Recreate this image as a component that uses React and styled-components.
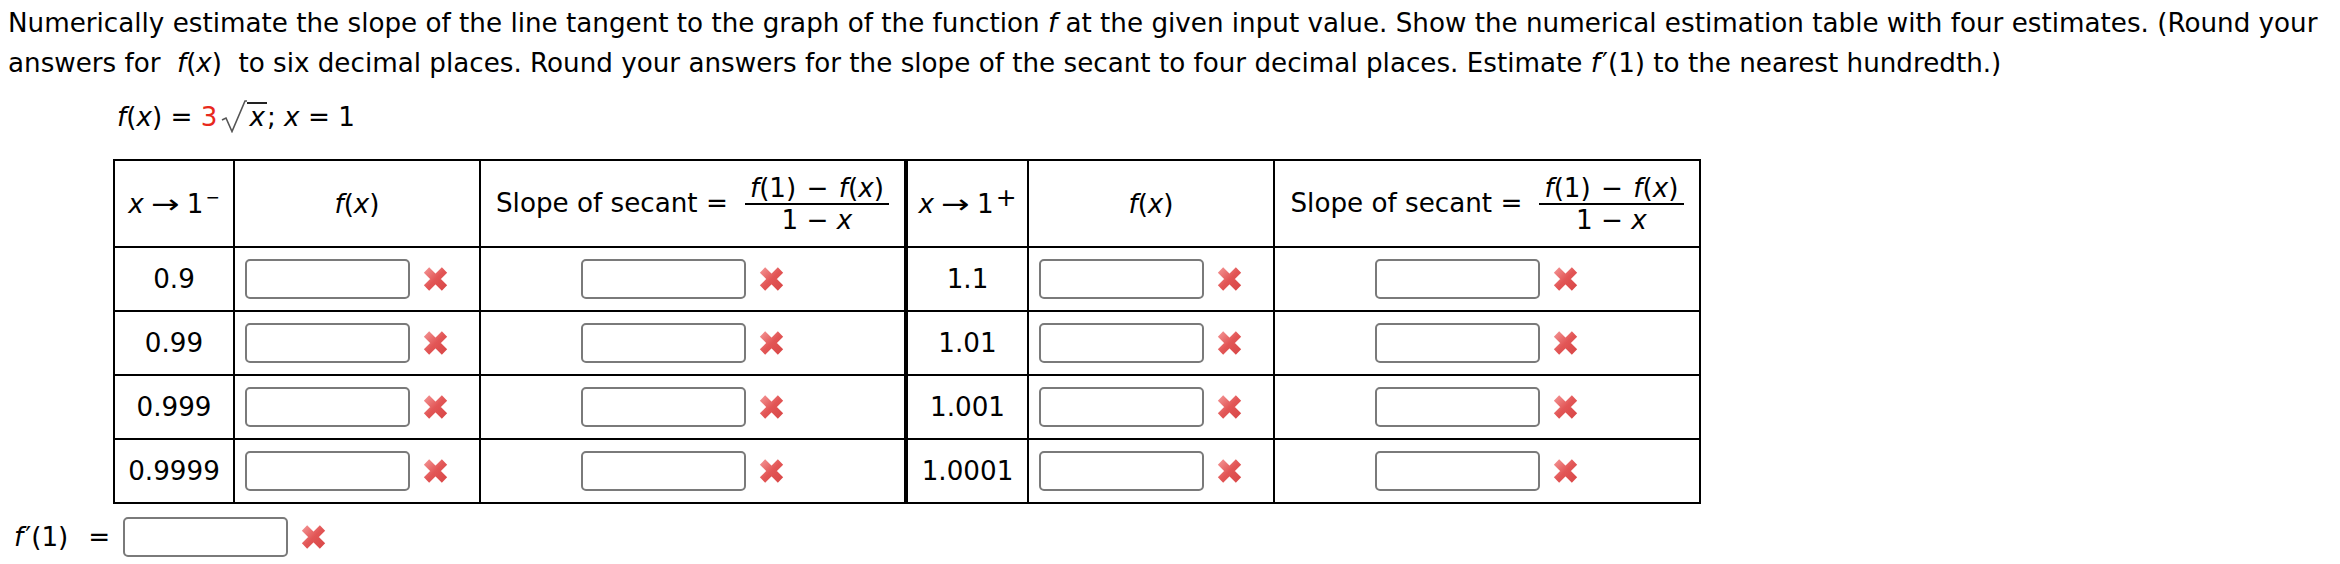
import styled, { createGlobalStyle } from "styled-components";

const GlobalStyle = createGlobalStyle`
  body {
    margin: 0;
    background: #ffffff;
    color: #000000;
    font-family: "DejaVu Sans", Verdana, sans-serif;
    font-size: 26.2px;
  }
`;

const Page = styled.div`
  padding: 3px 8px 0 8px;
`;

const Question = styled.div`
  line-height: 40px;

  > span {
    display: block;
    white-space: nowrap;
  }
`;

const Math = styled.span`
  padding: 0 ${(p) => (p.$pad ? "8px" : "0")};
  white-space: nowrap;
`;

const Var = styled.i`
  font-style: italic;
`;

const Prime = styled.span`
  margin-left: 2px;
`;

const Arrow = styled.span`
  display: inline-block;
  margin: 0 11px 0 10px;
  transform: scaleX(1.3);
`;

const Op = styled.span`
  white-space: pre;
  margin: 0 ${(p) => (p.$wide ? "2px" : "0")};
`;

const Indented = styled.div`
  margin-left: 105px;
`;

const Equation = styled.div`
  margin-top: 14px;
  height: 40px;
  line-height: 40px;
  padding-left: 4px;
  white-space: pre;
`;

const Red = styled.span`
  color: #e8291c;
`;

const Radical = styled.span`
  display: inline-block;
  margin-left: 4px;
  line-height: 40px;

  svg {
    vertical-align: -7px;
  }
`;

const Radicand = styled.span`
  display: inline-block;
  border-top: 2px solid #222;
  line-height: 26px;
  padding: 0 2px;
`;

const Grid = styled.table`
  margin-top: 22px;
  border-collapse: collapse;
  table-layout: fixed;
`;

const Th = styled.th`
  border: 2px solid #000;
  border-right-width: ${(p) => (p.$thick ? "4px" : "2px")};
  height: 85px;
  padding: 0;
  font-weight: normal;
  text-align: center;
  vertical-align: middle;
  white-space: nowrap;
`;

const Td = styled.td`
  border: 2px solid #000;
  border-right-width: ${(p) => (p.$thick ? "4px" : "2px")};
  height: 62px;
  padding: 0;
  text-align: center;
  vertical-align: middle;
  white-space: nowrap;
`;

const Sup = styled.sup`
  font-size: ${(p) => p.$size};
  line-height: 0;
  vertical-align: ${(p) => p.$raise};
  margin-left: 2px;
`;

const Fraction = styled.span`
  display: inline-flex;
  flex-direction: column;
  align-items: center;
  vertical-align: middle;
  margin-left: 17px;
  line-height: 30px;
`;

const Numer = styled.span`
  border-bottom: 2px solid #000;
  padding: 0 5px;
`;

const Denom = styled.span`
  padding: 0 3px;
`;

const Answer = styled.span`
  display: inline-flex;
  align-items: center;
  padding-right: ${(p) => (p.$trail ? "20px" : "0")};
`;

const Field = styled.input`
  box-sizing: border-box;
  width: 165px;
  height: 40px;
  border: 2px solid #7a7a7a;
  border-radius: 5px;
  background: #ffffff;
  margin: 0;
  padding: 0 6px;
  font: inherit;
`;

const Mark = styled.span`
  display: inline-flex;
  margin-left: 12px;
  width: 27px;
  height: 26px;
`;

const Final = styled.div`
  margin-top: 13px;
  display: flex;
  align-items: center;
  padding-left: 6px;
  line-height: 40px;
`;

const FinalLabel = styled.span`
  margin-right: 20px;
  white-space: nowrap;
`;

const Equals = styled.span`
  margin-right: 13px;
`;

const WrongIcon = () => (
  <svg width="27" height="26" viewBox="0 0 27 26">
    <defs>
      <linearGradient id="xg" x1="0" y1="0" x2="1" y2="1">
        <stop offset="0" stopColor="#f08080" />
        <stop offset="0.5" stopColor="#e04848" />
        <stop offset="1" stopColor="#d83a3a" />
      </linearGradient>
    </defs>
    <path
      d="M4.5 4 L22.5 22 M22.5 4 L4.5 22"
      stroke="url(#xg)"
      strokeWidth="7.5"
      strokeLinecap="butt"
      opacity="0.92"
    />
  </svg>
);

const AnswerBox = ({ trail = true }) => (
  <Answer $trail={trail}>
    <Field type="text" />
    <Mark>
      <WrongIcon />
    </Mark>
  </Answer>
);

const FX = () => (
  <>
    <Var>f</Var>(<Var>x</Var>)
  </>
);

const Approach = ({ side }) => (
  <>
    <Var>x</Var>
    <Arrow>→</Arrow>1
    {side === "-" ? (
      <Sup $size="0.65em" $raise="0.55em">−</Sup>
    ) : (
      <Sup $size="0.95em" $raise="0.25em">+</Sup>
    )}
  </>
);

const SecantHeader = () => (
  <>
    Slope of secant =
    <Fraction>
      <Numer>
        <Var>f</Var>(1)
        <Op $wide>{" − "}</Op>
        <Var>f</Var>(<Var>x</Var>)
      </Numer>
      <Denom>
        1<Op>{" − "}</Op>
        <Var>x</Var>
      </Denom>
    </Fraction>
  </>
);

const left = ["0.9", "0.99", "0.999", "0.9999"];
const right = ["1.1", "1.01", "1.001", "1.0001"];

const App = () => (
  <Page>
    <GlobalStyle />
    <Question>
      <span>
        Numerically estimate the slope of the line tangent to the graph of the
        function <Var>f</Var> at the given input value. Show the numerical
        estimation table with four estimates. (Round your
      </span>
      <span>
        answers for{" "}
        <Math $pad>
          <FX />
        </Math>{" "}
        to six decimal places. Round your answers for the slope of the secant
        to four decimal places. Estimate <Var>f</Var>
        <Prime>′</Prime>(1) to the nearest hundredth.)
      </span>
    </Question>
    <Indented>
      <Equation>
        <FX />
        {" = "}
        <Red>3</Red>
        <Radical>
          <svg width="26" height="33" viewBox="0 0 26 33">
            <path
              d="M1 20 L5 18 L11 31.5 L24 1 L26 1"
              fill="none"
              stroke="#555"
              strokeWidth="1.6"
            />
          </svg>
          <Radicand>
            <Var>x</Var>
          </Radicand>
        </Radical>
        {"; "}
        <Var>x</Var>
        {" = 1"}
      </Equation>
      <Grid>
        <colgroup>
          <col style={{ width: 120 }} />
          <col style={{ width: 246 }} />
          <col style={{ width: 426 }} />
          <col style={{ width: 122 }} />
          <col style={{ width: 246 }} />
          <col style={{ width: 426 }} />
        </colgroup>
        <thead>
          <tr>
            <Th>
              <Approach side="-" />
            </Th>
            <Th>
              <FX />
            </Th>
            <Th $thick>
              <SecantHeader />
            </Th>
            <Th>
              <Approach side="+" />
            </Th>
            <Th>
              <FX />
            </Th>
            <Th>
              <SecantHeader />
            </Th>
          </tr>
        </thead>
        <tbody>
          {left.map((value, i) => (
            <tr key={value}>
              <Td>{value}</Td>
              <Td>
                <AnswerBox />
              </Td>
              <Td $thick>
                <AnswerBox />
              </Td>
              <Td>{right[i]}</Td>
              <Td>
                <AnswerBox />
              </Td>
              <Td>
                <AnswerBox />
              </Td>
            </tr>
          ))}
        </tbody>
      </Grid>
    </Indented>
    <Final>
      <FinalLabel>
        <Var>f</Var>
        <Prime>′</Prime>(1)
      </FinalLabel>
      <Equals>=</Equals>
      <AnswerBox trail={false} />
    </Final>
  </Page>
);

export default App;
